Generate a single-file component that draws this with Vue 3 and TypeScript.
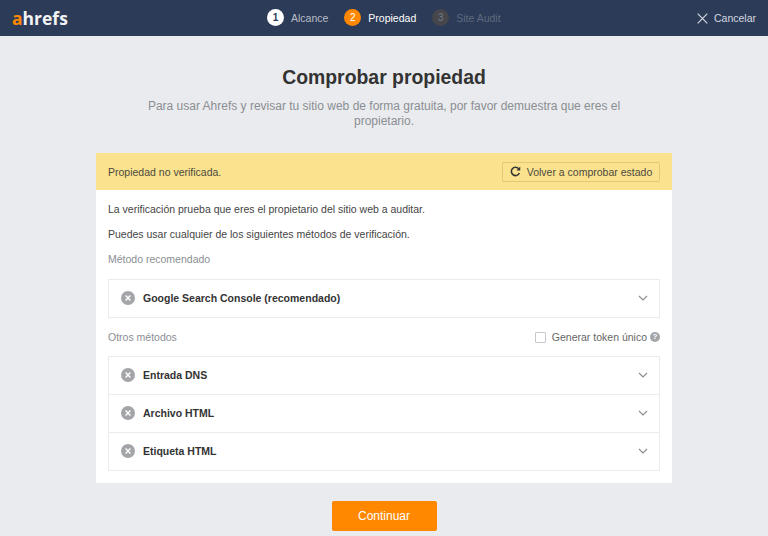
<script setup lang="ts">
const steps = [
  { n: 1, label: "Alcance", state: "done" },
  { n: 2, label: "Propiedad", state: "current" },
  { n: 3, label: "Site Audit", state: "todo" },
];
const otherMethods = ["Entrada DNS", "Archivo HTML", "Etiqueta HTML"];
</script>

<template>
  <header class="topbar">
    <div class="logo"><span class="logo-a">a</span>hrefs</div>
    <ol class="steps">
      <li v-for="step in steps" :key="step.n" class="step" :class="step.state">
        <span class="num">{{ step.n }}</span>
        <span>{{ step.label }}</span>
      </li>
    </ol>
    <div class="cancel">
      <svg width="11" height="11" viewBox="0 0 11 11"><path d="M.7.7l9.6 9.6M10.3.7L.7 10.3" stroke="#d5d9e0" stroke-width="1.2" fill="none" /></svg>
      <span>Cancelar</span>
    </div>
  </header>

  <main class="page">
    <h1>Comprobar propiedad</h1>
    <p class="lead">Para usar Ahrefs y revisar tu sitio web de forma gratuita, por favor demuestra que eres el propietario.</p>

    <section class="card">
      <div class="notice">
        <span>Propiedad no verificada.</span>
        <button class="recheck">
          <svg width="11" height="11" viewBox="0 0 12 12"><path d="M10.2 7.6A4.5 4.5 0 1 1 9.4 3" stroke="#333" stroke-width="1.7" fill="none" /><path d="M11.2.6v4.2H7z" fill="#333" /></svg>
          Volver a comprobar estado
        </button>
      </div>
      <div class="body">
        <p class="line">La verificación prueba que eres el propietario del sitio web a auditar.</p>
        <p class="line">Puedes usar cualquier de los siguientes métodos de verificación.</p>
        <p class="line muted rec">Método recomendado</p>

        <div class="methods">
          <div class="method">
            <svg class="status" width="14" height="14" viewBox="0 0 14 14"><circle cx="7" cy="7" r="7" fill="#a3a5a9" /><path d="M4.6 4.6l4.8 4.8M9.4 4.6l-4.8 4.8" stroke="#fff" stroke-width="1.4" /></svg>
            <strong>Google Search Console (recomendado)</strong>
            <svg class="chev" width="10" height="6" viewBox="0 0 10 6"><path d="M1 1l4 4 4-4" stroke="#8a8d92" stroke-width="1.2" fill="none" /></svg>
          </div>
        </div>

        <div class="others">
          <span class="muted">Otros métodos</span>
          <label class="token">
            <span class="check"></span>
            <span>Generar token único</span>
            <span class="help">?</span>
          </label>
        </div>

        <div class="methods">
          <div v-for="m in otherMethods" :key="m" class="method">
            <svg class="status" width="14" height="14" viewBox="0 0 14 14"><circle cx="7" cy="7" r="7" fill="#a3a5a9" /><path d="M4.6 4.6l4.8 4.8M9.4 4.6l-4.8 4.8" stroke="#fff" stroke-width="1.4" /></svg>
            <strong>{{ m }}</strong>
            <svg class="chev" width="10" height="6" viewBox="0 0 10 6"><path d="M1 1l4 4 4-4" stroke="#8a8d92" stroke-width="1.2" fill="none" /></svg>
          </div>
        </div>
      </div>
    </section>

    <button class="continue">Continuar</button>
  </main>
</template>

<style>
html, body {
  margin: 0;
  background: #e9ebee;
}
</style>

<style scoped>
.topbar {
  height: 36px;
  background: #2c3b57;
  display: flex;
  align-items: center;
  position: relative;
  padding: 0 12px;
  font: 10.5px "Liberation Sans", Arial, sans-serif;
}

.logo {
  font: bold 17.5px "Open Sans", "Liberation Sans", sans-serif;
  color: #f2f3f5;
}

.logo-a {
  color: #ff8800;
}

.steps {
  list-style: none;
  margin: 0;
  padding: 0;
  position: absolute;
  left: 267px;
  top: 9px;
  display: flex;
  gap: 16px;
}

.step {
  display: flex;
  align-items: center;
  gap: 7px;
  color: #b9bec8;
}

.num {
  width: 17px;
  height: 17px;
  border-radius: 50%;
  font-size: 10px;
  display: flex;
  align-items: center;
  justify-content: center;
}

.done .num {
  background: #fff;
  color: #2c3b57;
  font-weight: bold;
}

.current {
  color: #fff;
}

.current .num {
  background: #ff8800;
}

.todo {
  color: #5f6a7e;
}

.todo .num {
  background: #45474d;
  color: #747a85;
}

.cancel {
  margin-left: auto;
  display: flex;
  align-items: center;
  gap: 6px;
  color: #d5d9e0;
}

.page {
  display: flex;
  flex-direction: column;
  align-items: center;
  font: 10.5px "Liberation Sans", Arial, sans-serif;
  color: #333;
}

h1 {
  margin: 29px 0 0;
  font-size: 19.4px;
  line-height: 24px;
  color: #333;
}

.lead {
  width: 490px;
  margin: 10px 0 0;
  text-align: center;
  font-size: 12px;
  line-height: 15px;
  color: #8b8e93;
}

.card {
  width: 576px;
  margin-top: 24px;
  background: #fff;
}

.notice {
  height: 37px;
  box-sizing: border-box;
  background: #fbe28f;
  padding: 0 12px;
  display: flex;
  align-items: center;
  justify-content: space-between;
  color: #4c4a3c;
}

.recheck {
  height: 20px;
  width: 158px;
  box-sizing: border-box;
  display: flex;
  align-items: center;
  justify-content: center;
  gap: 6px;
  background: transparent;
  border: 1px solid #e3c976;
  border-radius: 2px;
  font: inherit;
  color: #4c4a3c;
  padding: 0;
}

.body {
  padding: 13px 12px 12px;
}

.line {
  margin: 0 0 12px;
  line-height: 13px;
  color: #444;
}

.rec {
  margin-bottom: 13px;
}

.muted {
  color: #8b8e93;
}

.methods {
  border: 1px solid #e9ebee;
}

.method {
  height: 37px;
  box-sizing: border-box;
  display: flex;
  align-items: center;
  padding: 0 11px 2px 12px;
  gap: 8px;
  color: #333;
}

.method + .method {
  height: 38px;
  border-top: 1px solid #e9ebee;
}

.chev {
  margin-left: auto;
}

.others {
  display: flex;
  justify-content: space-between;
  align-items: center;
  height: 38px;
}

.token {
  display: flex;
  align-items: center;
  gap: 6px;
  color: #666;
}

.check {
  width: 9px;
  height: 9px;
  border: 1px solid #c6c8cc;
  border-radius: 1px;
  background: #fff;
}

.help {
  width: 10px;
  height: 10px;
  margin-left: -3px;
  border-radius: 50%;
  background: #a3a5a9;
  color: #fff;
  font-size: 8px;
  font-weight: bold;
  line-height: 10px;
  text-align: center;
}

.continue {
  margin-top: 18px;
  width: 105px;
  height: 30px;
  background: #ff8800;
  border: none;
  border-radius: 2px;
  color: #fff;
  font: 12px "Liberation Sans", Arial, sans-serif;
}
</style>
